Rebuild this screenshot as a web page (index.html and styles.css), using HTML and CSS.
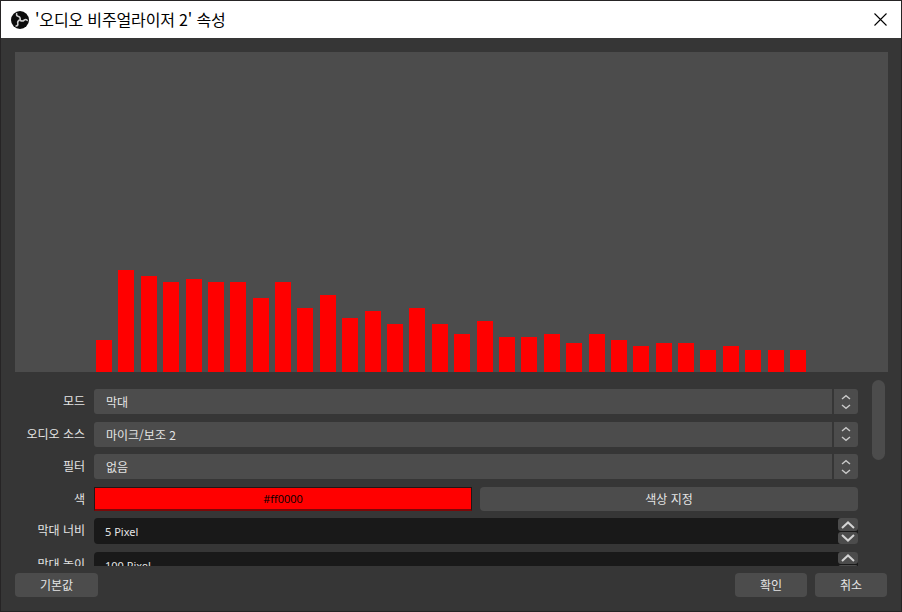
FILE: index.html
```html
<!DOCTYPE html>
<html lang="ko">
<head>
<meta charset="utf-8">
<title>'오디오 비주얼라이저 2' 속성</title>
<link rel="stylesheet" href="styles.css">
</head>
<body>
<svg width="0" height="0" class="defs">
  <symbol id="updown" viewBox="0 0 10 16"><path d="M1 5 5 1.600 9 5M1 11 5 14.400 9 11" fill="none" stroke="#c8c8c8" stroke-width="1.4"/></symbol>
  <symbol id="up" viewBox="0 0 14 8"><path d="M1 7 7 1.4 13 7" fill="none" stroke="#d4d4d4" stroke-width="2"/></symbol>
  <symbol id="down" viewBox="0 0 14 8"><path d="M1 1 7 6.6 13 1" fill="none" stroke="#d4d4d4" stroke-width="2"/></symbol>
</svg>
<div class="window">
  <header class="titlebar">
    <svg class="logo" width="18" height="18" viewBox="0 0 18 18">
      <circle cx="9" cy="9" r="9" fill="#0c0c0c"/>
      <g fill="none" stroke="#d0d0d0" stroke-width="1.5" stroke-linecap="round">
        <path id="arm" d="M9.300 8.500C9.300 6.300 8.300 5.600 7 5.300 5.700 4.900 5.300 3.900 5.700 2.600"/>
        <use href="#arm" transform="rotate(120 9 9)"/>
        <use href="#arm" transform="rotate(240 9 9)"/>
      </g>
    </svg>
    <h1 class="title">'오디오 비주얼라이저 2' 속성</h1>
    <svg class="close" width="13" height="13" viewBox="0 0 13 13"><path d="M.5 .5l12 12M12.500 .5l-12 12" stroke="#000" stroke-width="1.1"/></svg>
  </header>
  <main class="body">
    <svg class="preview" width="873" height="320" viewBox="15 52 873 320" shape-rendering="crispEdges">
      <path fill="#f00" d="M96 372V340h16v32zM118 372V270h16v102zM141 372V276h16v96zM163 372V282h16v90zM186 372V279h16v93zM208 372V282h16v90zM230 372V282h16v90zM253 372V298h16v74zM275 372V282h16v90zM297 372V308h16v64zM320 372V295h16v77zM342 372V318h16v54zM365 372V311h16v61zM387 372V324h16v48zM409 372V308h16v64zM432 372V324h16v48zM454 372V334h16v38zM477 372V321h16v51zM499 372V337h16v35zM521 372V337h16v35zM544 372V334h16v38zM566 372V343h16v29zM589 372V334h16v38zM611 372V340h16v32zM633 372V346h16v26zM656 372V343h16v29zM678 372V343h16v29zM700 372V350h16v22zM723 372V346h16v26zM745 372V350h16v22zM768 372V350h16v22zM790 372V350h16v22z"/>
    </svg>
    <div class="scroll">
      <div class="form">
        <label class="label">모드</label>
        <div class="combo"><span class="value">막대</span><span class="arrow"><svg width="10" height="16"><use href="#updown"/></svg></span></div>
        <label class="label">오디오 소스</label>
        <div class="combo"><span class="value">마이크/보조 2</span><span class="arrow"><svg width="10" height="16"><use href="#updown"/></svg></span></div>
        <label class="label">필터</label>
        <div class="combo"><span class="value">없음</span><span class="arrow"><svg width="10" height="16"><use href="#updown"/></svg></span></div>
        <label class="label">색</label>
        <div class="color"><span class="swatch">#ff0000</span><span class="button pick">색상 지정</span></div>
        <label class="label">막대 너비</label>
        <div class="spin"><span class="number">5 Pixel</span><span class="steps"><span class="step"><svg width="14" height="8"><use href="#up"/></svg></span><span class="step"><svg width="14" height="8"><use href="#down"/></svg></span></span></div>
        <label class="label">막대 높이</label>
        <div class="spin"><span class="number">100 Pixel</span><span class="steps"><span class="step"><svg width="14" height="8"><use href="#up"/></svg></span><span class="step"><svg width="14" height="8"><use href="#down"/></svg></span></span></div>
      </div>
      <div class="thumb"></div>
    </div>
    <footer class="actions">
      <span class="button reset">기본값</span>
      <span class="button ok">확인</span>
      <span class="button cancel">취소</span>
    </footer>
  </main>
</div>
</body>
</html>
```
FILE: styles.css
```css
* { box-sizing: border-box; }
body { margin: 0; background: #231f20; font: 12px/16px "Noto Sans CJK KR", sans-serif; color: #e4e4e4; }
.defs { display: none; }
.window { width: 902px; height: 612px; border: 1px solid #262425; background: #363636; }
.titlebar { height: 37px; background: #fff; display: flex; align-items: center; padding: 0 14px 0 10px; color: #000; }
.title { margin: 0 auto 2px 6px; font: 400 16px/24px "Noto Sans CJK KR", sans-serif; letter-spacing: -0.15px; white-space: nowrap; }
.body { padding: 14px 13px 0 14px; }
.preview { display: block; background: #4c4c4c; }
.scroll { height: 194px; overflow: hidden; display: flex; justify-content: space-between; padding-right: 3px; }
.form { width: 844px; padding-top: 17px; display: grid; grid-template-columns: 70px 764px; grid-template-rows: 25px 25px 25px 24px 26px 26px; column-gap: 9px; row-gap: 7.600px; align-content: start; }
.label { text-align: right; line-height: 24px; white-space: nowrap; }
.combo { display: flex; gap: 2px; height: 25px; }
.value { flex: 1; background: #4c4c4c; border-radius: 3px 0 0 3px; padding-left: 12px; line-height: 25px; }
.arrow { width: 24px; background: #4c4c4c; border-radius: 0 3px 3px 0; display: flex; align-items: center; justify-content: center; }
.color { display: flex; gap: 8px; }
.swatch { width: 378px; height: 24px; background: #f00; border: 1px solid #231414; border-bottom: 2px solid #7c0808; color: #000; text-align: center; font: 11px/22px "Open Sans", sans-serif; }
.button { height: 24px; background: #4c4c4c; border-radius: 4px; text-align: center; line-height: 23px; }
.pick { flex: 1; }
.spin { display: flex; height: 26px; background: #191919; border-radius: 4px; }
.number { flex: 1; padding-left: 11px; font: 11px/28px "Noto Sans", sans-serif; }
.steps { width: 20px; display: flex; flex-direction: column; gap: 1px; }
.step { flex: 1; background: #4c4c4c; display: flex; align-items: center; justify-content: center; border-radius: 3px; }
.thumb { width: 13px; height: 80px; margin-top: 8px; border-radius: 7px; background: #4c4c4c; }
.actions { display: flex; gap: 8px; padding: 7px 1px 0 0; }
.reset { width: 83px; margin-right: auto; }
.ok, .cancel { width: 72px; }
```
